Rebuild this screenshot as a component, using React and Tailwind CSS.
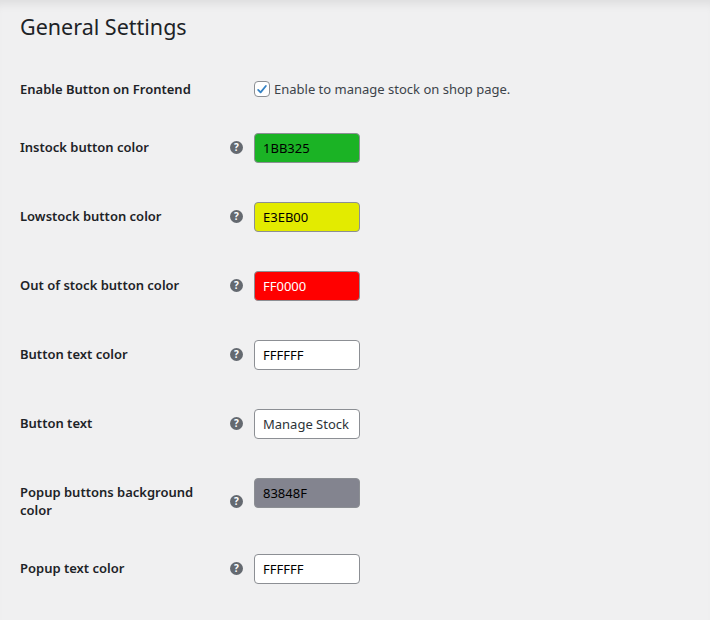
import React from 'react'

const fields = [
    { label: 'Instock button color', value: '1BB325', bg: 'bg-[#1bb325]', text: 'text-black' },
    { label: 'Lowstock button color', value: 'E3EB00', bg: 'bg-[#e3eb00]', text: 'text-black' },
    { label: 'Out of stock button color', value: 'FF0000', bg: 'bg-[#ff0000]', text: 'text-white' },
    { label: 'Button text color', value: 'FFFFFF', bg: 'bg-white', text: 'text-black' },
    { label: 'Button text', value: 'Manage Stock', bg: 'bg-white', text: 'text-[#2c3338]' },
    { label: 'Popup buttons background color', value: '83848F', bg: 'bg-[#83848f]', text: 'text-black' },
    { label: 'Popup text color', value: 'FFFFFF', bg: 'bg-white', text: 'text-black' },
]

const HelpTip = () => (
    <span className="flex items-center justify-center w-[13px] h-[13px] rounded-full bg-[#646970] text-white text-[10px] font-bold leading-none shrink-0">
        ?
    </span>
)

const SettingRow = ({ field }) => (
    <div className="flex min-h-[69px]">
        <div className="flex items-center w-[234px] pt-[25px] pb-[15px] self-start">
            <label className="w-[210px] pr-4 font-semibold text-[13px] leading-[18px] text-[#1d2327]">{field.label}</label>
            <HelpTip />
        </div>
        <div className="pt-[20px] pb-[19px]">
            <input
                readOnly
                value={field.value}
                className={`w-[106px] h-[30px] px-[8px] border border-[#8c8f94] rounded-[4px] text-[13px] outline-none ${field.bg} ${field.text}`}
            />
        </div>
    </div>
)

export default function App() {
    return (
        <div
            className="min-h-[620px] bg-[#f0f0f1] px-5 pt-[12px] shadow-[inset_0_10px_10px_-6px_rgba(0,0,0,0.08)]"
            style={{ fontFamily: '"Noto Sans", "Open Sans", sans-serif' }}
        >
            <h2 className="text-[21.5px] leading-[30px] font-normal text-[#1d2327] mb-[13px]">General Settings</h2>

            <div className="flex h-[58px]">
                <div className="flex items-start w-[234px] pt-[25px]">
                    <span className="block font-semibold text-[13px] leading-[18px] text-[#1d2327]">Enable Button on Frontend</span>
                </div>
                <label className="flex items-center gap-[4px] pt-[25px] h-[43px] text-[13px] leading-[18px] text-[#3c434a]">
                    <span className="flex items-center justify-center w-[16px] h-[16px] bg-white border border-[#8c8f94] rounded-[4px]">
                        <svg viewBox="0 0 20 20" className="w-[15px] h-[15px]" fill="none">
                            <path d="M4.5 10.5l3.5 3.5 7.5-9" stroke="#3582c4" strokeWidth="2.6" strokeLinecap="round" strokeLinejoin="round" />
                        </svg>
                    </span>
                    Enable to manage stock on shop page.
                </label>
            </div>

            {fields.map((f) => (
                <SettingRow key={f.label} field={f} />
            ))}
        </div>
    )
}
